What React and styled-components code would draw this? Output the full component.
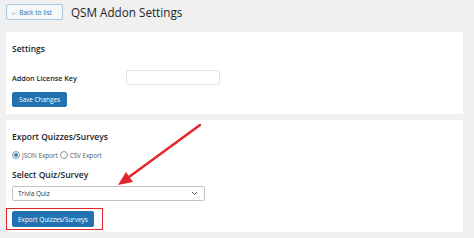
import React from 'react';
import styled, { createGlobalStyle } from 'styled-components';

const GlobalStyle = createGlobalStyle`
  body {
    margin: 0;
    background: #f0f0f1;
    font-family: "Open Sans", "Noto Sans", sans-serif;
    color: #1d2327;
  }
`;

const Page = styled.div`
  position: relative;
  width: 474px;
  height: 238px;
  overflow: hidden;
  padding: 0 11px 0 6px;
  box-sizing: border-box;
`;

const Header = styled.div`
  display: flex;
  align-items: center;
  gap: 8px;
  height: 24px;
  margin-bottom: 8px;
`;

const BackButton = styled.button`
  display: flex;
  align-items: center;
  gap: 2px;
  height: 16px;
  width: 57px;
  padding: 0 4px;
  border: 1px solid #a9c7df;
  border-radius: 2px;
  background: #f6f7f7;
  color: #2271b1;
  font-family: inherit;
  font-size: 6.5px;
  white-space: nowrap;
  box-sizing: border-box;
`;

const PageTitle = styled.h1`
  margin: 0;
  font-size: 11.7px;
  font-weight: 400;
  color: #1d2327;
`;

const Panel = styled.div`
  display: flow-root;
  position: relative;
  background: #fff;
  padding: 10px 6px ${p => p.$bottom || 6}px;
  margin-bottom: 6px;
`;

const SectionTitle = styled.h2`
  margin: ${p => p.$top || 0}px 0 0;
  font-size: 8.5px;
  line-height: 14px;
  font-weight: 600;
`;

const Row = styled.div`
  display: flex;
  align-items: center;
  margin-top: ${p => p.$top || 0}px;
`;

const Label = styled.label`
  width: 114px;
  font-size: 7.2px;
  font-weight: 600;
`;

const TextInput = styled.input`
  width: 94px;
  height: 15px;
  border: 1px solid #e4e4e6;
  border-radius: 2px;
  box-sizing: border-box;
`;

const Button = styled.button`
  display: block;
  height: ${p => p.$h || 15}px;
  padding: 0 ${p => p.$px || 6}px;
  background: #2271b1;
  border: 1px solid #2271b1;
  border-radius: 2px;
  color: #fff;
  font-family: inherit;
  font-size: 6.4px;
  white-space: nowrap;
`;

const RadioRow = styled.div`
  display: flex;
  align-items: center;
  height: 10px;
  margin-top: 6px;
  font-size: 6.3px;
  color: #50575e;
`;

const Radio = styled.span`
  width: 6px;
  height: 6px;
  border-radius: 50%;
  border: 1px solid #8c8f94;
  margin: 0 2px 0 ${p => p.$ml || 0}px;
  display: inline-flex;
  align-items: center;
  justify-content: center;
  &::after {
    content: '';
    width: 4px;
    height: 4px;
    border-radius: 50%;
    background: ${p => (p.$checked ? '#3582c4' : 'transparent')};
  }
`;

const Select = styled.div`
  display: flex;
  align-items: center;
  justify-content: space-between;
  width: 193px;
  height: 15px;
  margin-top: 4px;
  padding: 0 6px 0 5px;
  border: 1px solid #c3c4c7;
  border-radius: 2px;
  box-sizing: border-box;
  font-size: 6.5px;
  color: #2c3338;
`;

const Highlight = styled.div`
  position: relative;
  width: fit-content;
  margin-top: 10px;
  &::before {
    content: '';
    position: absolute;
    left: -6px;
    top: -3px;
    width: 97px;
    height: 22px;
    border: 1.5px solid #e3262b;
    box-sizing: border-box;
  }
`;

const ArrowSvg = styled.svg`
  position: absolute;
  left: 110px;
  top: 120px;
  pointer-events: none;
`;

export default function App() {
  return (
    <Page>
      <GlobalStyle />
      <Header>
        <BackButton>← Back to list</BackButton>
        <PageTitle>QSM Addon Settings</PageTitle>
      </Header>

      <Panel $bottom={7}>
        <SectionTitle>Settings</SectionTitle>
        <Row $top={14}>
          <Label>Addon License Key</Label>
          <TextInput />
        </Row>
        <Row $top={7}>
          <Button>Save Changes</Button>
        </Row>
      </Panel>

      <Panel $bottom={5}>
        <SectionTitle>Export Quizzes/Surveys</SectionTitle>
        <RadioRow>
          <Radio $checked />
          JSON Export
          <Radio $ml={2} />
          CSV Export
        </RadioRow>
        <SectionTitle $top={8}>Select Quiz/Survey</SectionTitle>
        <Select>
          <span>Trivia Quiz</span>
          <svg width="7" height="5" viewBox="0 0 7 5">
            <path d="M1 1l2.5 2.5L6 1" fill="none" stroke="#50575e" strokeWidth="1" />
          </svg>
        </Select>
        <Highlight>
          <Button $h={16} $px={5}>Export Quizzes/Surveys</Button>
        </Highlight>
      </Panel>

      <ArrowSvg width="96" height="72" viewBox="0 0 96 72">
        <line x1="90" y1="5" x2="19" y2="57" stroke="#e3262b" strokeWidth="2.5" strokeLinecap="round" />
        <polygon points="8,65 23,62 16,52" fill="#e3262b" />
      </ArrowSvg>
    </Page>
  );
}
